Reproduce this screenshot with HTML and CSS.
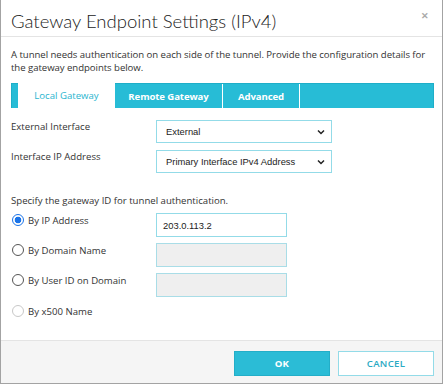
FILE: index.html
```html
<!DOCTYPE html>
<html>
<head>
<meta charset="utf-8">
<link rel="stylesheet" href="styles.css">
</head>
<body>
<div class="dialog">
  <div class="header">
    <h1 class="title">Gateway Endpoint Settings (IPv4)</h1>
    <span class="close">&#x2715;</span>
  </div>
  <div class="body">
    <p class="intro">A tunnel needs authentication on each side of the tunnel. Provide the configuration details for the gateway endpoints below.</p>
    <div class="tabs">
      <span class="tab-lead"></span>
      <span class="tab active">Local Gateway</span>
      <span class="tab remote">Remote Gateway</span>
      <span class="tab adv">Advanced</span>
      <span class="tab-rest"></span>
    </div>
    <div class="row">
      <span class="label">External Interface</span>
      <div class="select"><span>External</span><svg class="chev" width="8" height="6" viewBox="0 0 8 6"><path d="M1 1.5 L4 4.5 L7 1.5" fill="none" stroke="#222" stroke-width="1.5"/></svg></div>
    </div>
    <div class="row">
      <span class="label">Interface IP Address</span>
      <div class="select"><span>Primary Interface IPv4 Address</span><svg class="chev" width="8" height="6" viewBox="0 0 8 6"><path d="M1 1.5 L4 4.5 L7 1.5" fill="none" stroke="#222" stroke-width="1.5"/></svg></div>
    </div>
    <p class="spec">Specify the gateway ID for tunnel authentication.</p>
    <div class="rrow">
      <span class="rlabel"><span class="radio on"></span>By IP Address</span>
      <div class="field">203.0.113.2</div>
    </div>
    <div class="rrow">
      <span class="rlabel"><span class="radio"></span>By Domain Name</span>
      <div class="field off"></div>
    </div>
    <div class="rrow">
      <span class="rlabel"><span class="radio"></span>By User ID on Domain</span>
      <div class="field off"></div>
    </div>
    <div class="rrow last">
      <span class="rlabel"><span class="radio dis"></span>By x500 Name</span>
    </div>
  </div>
  <div class="footer">
    <span class="btn ok">OK</span>
    <span class="btn cancel">CANCEL</span>
  </div>
</div>
</body>
</html>
```
FILE: styles.css
```css
* { box-sizing: border-box; }
html, body { margin: 0; padding: 0; background: #fff; }
body { font-family: "Open Sans", "Noto Sans", sans-serif; color: #333; font-size: 9.6px; }
.dialog {
  width: 443px; height: 384px;
  border: 1px solid #a3a3a3; border-top: none;
  display: flex; flex-direction: column;
  background: #fff;
}
.header {
  height: 37px; border-bottom: 1px solid #e4e4e4;
  display: flex; align-items: center; justify-content: space-between;
  padding: 0 13px 0 10px;
}
.title {
  margin: 0; font-family: Lato, "Open Sans", sans-serif; font-weight: 300;
  font-size: 18.5px; color: #222; letter-spacing: 0; padding-top: 6px;
}
.close { color: #aaa; font-size: 9px; font-weight: bold; margin-top: -6px; }
.body { flex: 1; padding: 11px 8px 0 10px; }
.intro { margin: 0; line-height: 13px; letter-spacing: -0.05px; }
.tabs {
  margin-top: 9px; height: 25px; display: flex;
  background: #27bcd6; border: 1px solid #1eaec8; border-bottom: none;
}
.tab-lead { width: 6px; }
.tab {
  display: flex; align-items: center; justify-content: center;
  font-size: 9.6px; color: #fff; font-weight: bold; letter-spacing: -0.1px;
}
.tab.active { width: 97px; background: #fff; color: #2ab5cf; font-weight: normal; margin-top: -1px; letter-spacing: 0; }
.tab.remote { width: 108px; border-right: 1px solid #fff; }
.tab.adv { width: 77px; border-right: 1px solid #fff; }
.tab-rest { flex: 1; }
.row { display: flex; height: 23px; margin-top: 12px; }
.row + .row { margin-top: 7px; }
.label { width: 145px; line-height: 13px; padding-top: 0; }
.select {
  width: 176px; height: 23px; border: 1px solid #93dbe8;
  display: flex; align-items: center; justify-content: space-between;
  padding: 0 6px 0 9px;
  font-family: "Liberation Sans", Arial, sans-serif; font-size: 9.4px; color: #222;
}
.chev { display: block; margin-top: 1px; }
.spec { margin: 21px 0 0; line-height: 13px; }
.rrow { display: flex; height: 24px; margin-top: 6px; }
.spec + .rrow { margin-top: 6px; }
.rrow.last { margin-top: 7px; height: 13px; }
.rlabel { width: 145px; display: flex; align-items: center; height: 14px; gap: 4px; }
.radio {
  width: 12px; height: 12px; border-radius: 50%; border: 1px solid #555;
  background: #fff; flex: none; margin-left: 1px;
}
.radio.on { border: 1.5px solid #1a73e8; background: radial-gradient(circle, #1a73e8 0 3.2px, #fff 3.6px); }
.radio.dis { border-color: #c8c8c8; }
.field {
  width: 131px; height: 24px; border: 1px solid #93dbe8;
  display: flex; align-items: center; padding-left: 6px;
  font-family: "Liberation Sans", Arial, sans-serif; font-size: 9.4px; color: #222;
}
.field.off { background: #efefef; border-color: #a9dde7; }
.footer {
  height: 43px; border-top: 1px solid #e4e4e4; background: #f5f5f5;
  display: flex; justify-content: flex-end; align-items: flex-start;
  padding: 10px 8px 0 0; gap: 8px;
}
.btn {
  width: 96px; height: 25px; display: flex; align-items: center; justify-content: center;
  font-size: 9.6px; font-weight: bold; letter-spacing: 0.3px;
}
.btn.ok { background: #2bbcd6; color: #fff; border: 1px solid #23aec8; }
.btn.cancel { background: #fff; color: #2aaac4; border: 1px solid #93dbe8; font-weight: 600; }
```
